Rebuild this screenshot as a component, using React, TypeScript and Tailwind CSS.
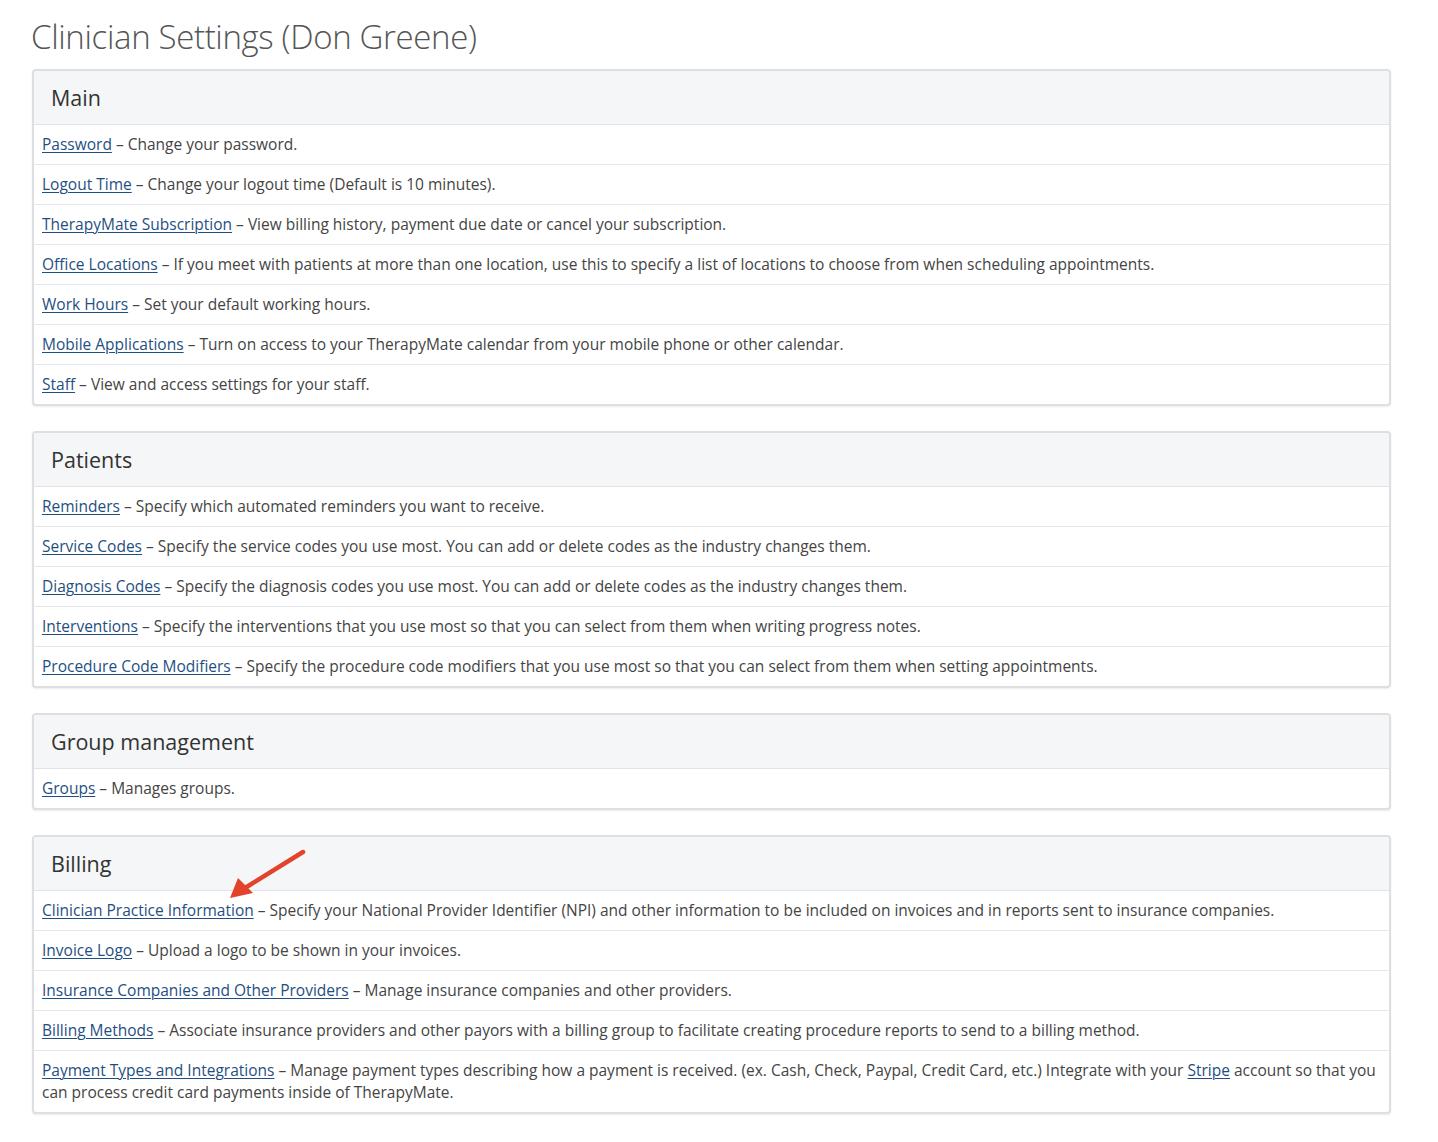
import React from "react";

type Item = { link: string; text: React.ReactNode };
type Section = { title: string; items: Item[] };

const linkCls = "text-[#1f4f82] underline underline-offset-2 decoration-1";

const sections: Section[] = [
  {
    title: "Main",
    items: [
      { link: "Password", text: "Change your password." },
      { link: "Logout Time", text: "Change your logout time (Default is 10 minutes)." },
      { link: "TherapyMate Subscription", text: "View billing history, payment due date or cancel your subscription." },
      {
        link: "Office Locations",
        text: "If you meet with patients at more than one location, use this to specify a list of locations to choose from when scheduling appointments.",
      },
      { link: "Work Hours", text: "Set your default working hours." },
      { link: "Mobile Applications", text: "Turn on access to your TherapyMate calendar from your mobile phone or other calendar." },
      { link: "Staff", text: "View and access settings for your staff." },
    ],
  },
  {
    title: "Patients",
    items: [
      { link: "Reminders", text: "Specify which automated reminders you want to receive." },
      { link: "Service Codes", text: "Specify the service codes you use most. You can add or delete codes as the industry changes them." },
      { link: "Diagnosis Codes", text: "Specify the diagnosis codes you use most. You can add or delete codes as the industry changes them." },
      { link: "Interventions", text: "Specify the interventions that you use most so that you can select from them when writing progress notes." },
      {
        link: "Procedure Code Modifiers",
        text: "Specify the procedure code modifiers that you use most so that you can select from them when setting appointments.",
      },
    ],
  },
  {
    title: "Group management",
    items: [{ link: "Groups", text: "Manages groups." }],
  },
  {
    title: "Billing",
    items: [
      {
        link: "Clinician Practice Information",
        text: "Specify your National Provider Identifier (NPI) and other information to be included on invoices and in reports sent to insurance companies.",
      },
      { link: "Invoice Logo", text: "Upload a logo to be shown in your invoices." },
      { link: "Insurance Companies and Other Providers", text: "Manage insurance companies and other providers." },
      {
        link: "Billing Methods",
        text: "Associate insurance providers and other payors with a billing group to facilitate creating procedure reports to send to a billing method.",
      },
      {
        link: "Payment Types and Integrations",
        text: (
          <>
            Manage payment types describing how a payment is received. (ex. Cash, Check, Paypal, Credit Card, etc.) Integrate with your{" "}
            <a href="#" className={linkCls}>
              Stripe
            </a>{" "}
            account so that you can process credit card payments inside of TherapyMate.
          </>
        ),
      },
    ],
  },
];

function Arrow() {
  return (
    <svg className="absolute left-[191px] top-[10px] pointer-events-none" width="84" height="56" viewBox="0 0 84 56">
      <line x1="78" y1="5" x2="20" y2="41" stroke="#e2432a" strokeWidth="4.5" strokeLinecap="round" />
      <polygon points="5,51 13,31 28,46" fill="#e2432a" />
    </svg>
  );
}

function Panel({ section }: { section: Section }) {
  return (
    <div className="relative border-2 border-[#dedfe2] rounded-[4px] bg-white shadow-[0_1px_2px_rgba(0,0,0,0.08)]">
      <div className="bg-[#f5f6f8] border-b border-[#e2e3e6] h-[54px] flex items-center px-[17px] rounded-t-[3px]">
        <h2 className="text-[21.5px] text-[#333] leading-none">{section.title}</h2>
      </div>
      {section.items.map((it, i) => (
        <div
          key={i}
          className={
            "pl-[8px] pr-[6px] pt-[8px] pb-[9px] text-[15.5px] leading-[22px] text-[#444] " +
            (i > 0 ? "border-t border-[#e6e7ea]" : "")
          }
        >
          <a href="#" className={linkCls}>
            {it.link}
          </a>{" "}
          – {it.text}
        </div>
      ))}
      {section.title === "Billing" && <Arrow />}
    </div>
  );
}

export default function App() {
  return (
    <div
      className="min-h-screen bg-white pl-[31px] pr-[47px] pt-[15px] pb-[26px]"
      style={{ fontFamily: '"Open Sans", "Liberation Sans", sans-serif' }}
    >
      <h1 className="text-[33px] font-light text-[#555] leading-[44px] mb-[10px] tracking-[-0.35px]">
        Clinician Settings (Don Greene)
      </h1>
      <div className="flex flex-col gap-[25px] pl-[1px]">
        {sections.map((s) => (
          <Panel key={s.title} section={s} />
        ))}
      </div>
    </div>
  );
}
